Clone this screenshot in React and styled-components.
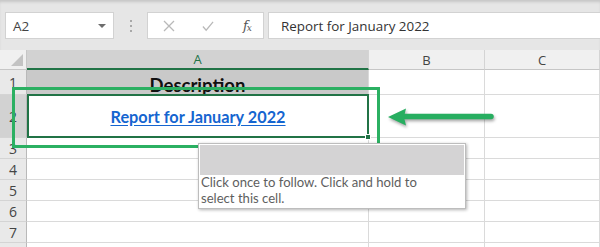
import React from 'react';
import styled, { createGlobalStyle } from 'styled-components';

const Global = createGlobalStyle`
  html, body { margin: 0; padding: 0; background: #fff; }
  body { font-family: Lato, "Open Sans", "Liberation Sans", sans-serif; overflow: hidden; }
  * { box-sizing: border-box; }
`;

const Page = styled.div`
  position: relative;
  width: 600px;
  height: 247px;
  overflow: hidden;
  background: #fff;
`;

const Toolbar = styled.div`
  height: 50px;
  background: #e6e6e6;
  display: flex;
  align-items: center;
  padding: 1px 0 0 5px;
  box-shadow: inset 0 3px 3px -1px rgba(0, 0, 0, 0.14);
`;

const Box = styled.div`
  height: 27px;
  background: #fff;
  border: 1px solid #d2d2d2;
  display: flex;
  align-items: center;
`;

const NameBox = styled(Box)`
  width: 109px;
  justify-content: space-between;
  padding: 0 7px 0 7px;
  font-family: "Open Sans", sans-serif;
  font-size: 13.5px;
  color: #444;
`;

const Caret = styled.span`
  width: 0;
  height: 0;
  border-left: 4px solid transparent;
  border-right: 4px solid transparent;
  border-top: 4px solid #6d6d6d;
`;

const Separator = styled.div`
  width: 33px;
  display: flex;
  flex-direction: column;
  align-items: center;
  gap: 3px;
`;

const Dot = styled.span`
  width: 2px;
  height: 2px;
  background: #a8a8a8;
`;

const ButtonBox = styled(Box)`
  width: 117px;
  padding-left: 15px;
  gap: 27px;
`;

const IconSlot = styled.span`
  width: 12px;
  display: flex;
  justify-content: center;
  color: #b4b4b4;
`;

const Fx = styled.span`
  font-family: "DejaVu Serif", "Liberation Serif", serif;
  font-style: italic;
  font-size: 13px;
  color: #555;
  letter-spacing: -1px;
  white-space: nowrap;
  sub {
    font-size: 9px;
    vertical-align: -1px;
  }
`;

const FormulaBar = styled(Box)`
  flex: 1;
  margin-left: 4px;
  border-right: none;
  padding-left: 12px;
  font-family: "Open Sans", sans-serif;
  font-size: 13.4px;
  color: #333;
`;

const Sheet = styled.div`
  display: grid;
  grid-template-columns: 27px 342px 116px 115px;
  grid-template-rows: 20px 25px 43px repeat(6, 21px);
`;

const ColHead = styled.div`
  background: ${p => (p.$active ? '#d2d2d2' : '#f0f0f0')};
  border-right: 1px solid #d4d4d4;
  border-bottom: ${p => (p.$active ? '2px solid #217346' : '1px solid #c6c6c6')};
  color: ${p => (p.$active ? '#217346' : '#444')};
  font-family: "Open Sans", sans-serif;
  font-size: 13px;
  display: flex;
  align-items: center;
  justify-content: center;
`;

const Corner = styled.div`
  background: #f0f0f0;
  border-right: 1px solid #c6c6c6;
  border-bottom: 1px solid #c6c6c6;
  display: flex;
  align-items: flex-end;
  justify-content: flex-end;
  padding: 0 3px 3px 0;
`;

const CornerTri = styled.span`
  width: 0;
  height: 0;
  border-left: 12px solid transparent;
  border-bottom: 12px solid #c3c3c3;
`;

const RowHead = styled.div`
  background: ${p => (p.$active ? '#d2d2d2' : '#e9e9e9')};
  border-right: 1px solid #b9b9b9;
  border-bottom: 1px solid #d4d4d4;
  color: #444;
  font-family: "Open Sans", sans-serif;
  font-size: 14px;
  display: flex;
  align-items: center;
  justify-content: center;
`;

const Cell = styled.div`
  position: relative;
  background: ${p => p.$bg || '#fff'};
  border-right: 1px solid #dadada;
  border-bottom: 1px solid #dadada;
  display: flex;
  align-items: center;
  justify-content: center;
`;

const SelectedCell = styled(Cell)`
  border: 2px solid #217346;
  margin: -1px 0 0 0;
  z-index: 1;
`;

const Handle = styled.span`
  position: absolute;
  right: -4px;
  bottom: -4px;
  width: 6px;
  height: 6px;
  background: #217346;
  border: 1px solid #fff;
`;

const Heading = styled.span`
  font-weight: 700;
  font-size: 18.5px;
  color: #111;
  padding-top: 6px;
`;

const Link = styled.a`
  font-weight: 700;
  font-size: 16.3px;
  color: #1565d0;
  text-decoration: underline;
  text-underline-offset: 2px;
`;

const Annotation = styled.div`
  position: absolute;
  left: 12px;
  top: 87px;
  width: 368px;
  height: 61px;
  border: 3px solid #2bb062;
  z-index: 2;
`;

const Arrow = styled.svg`
  position: absolute;
  left: 385px;
  top: 104px;
  z-index: 2;
  filter: drop-shadow(1px 2px 1.5px rgba(0, 0, 0, 0.35));
`;

const Tooltip = styled.div`
  position: absolute;
  left: 198px;
  top: 143px;
  width: 268px;
  height: 66px;
  background: #fff;
  border: 1px solid #bdbdbd;
  box-shadow: 1px 1px 3px rgba(0, 0, 0, 0.3);
  padding: 1px;
  z-index: 3;
  display: flex;
  flex-direction: column;
`;

const TipBand = styled.div`
  height: 30px;
  background: #d4d3d4;
`;

const TipText = styled.div`
  font-size: 13.1px;
  line-height: 15.5px;
  color: #5e5e5e;
  padding: 0 0 0 1px;
`;

const rows = [3, 4, 5, 6, 7];

export default function App() {
  return (
    <Page>
      <Global />
      <Toolbar>
        <NameBox>
          <span>A2</span>
          <Caret />
        </NameBox>
        <Separator>
          <Dot />
          <Dot />
          <Dot />
        </Separator>
        <ButtonBox>
          <IconSlot>
            <svg width="12" height="12" viewBox="0 0 12 12">
              <path d="M1 1 L11 11 M11 1 L1 11" stroke="#b9b9b9" strokeWidth="1.3" fill="none" />
            </svg>
          </IconSlot>
          <IconSlot>
            <svg width="13" height="12" viewBox="0 0 13 12">
              <path d="M1 6.5 L4.5 10.5 L12 1.5" stroke="#b9b9b9" strokeWidth="1.4" fill="none" />
            </svg>
          </IconSlot>
          <IconSlot>
            <Fx>f<sub>x</sub></Fx>
          </IconSlot>
        </ButtonBox>
        <FormulaBar>Report for January 2022</FormulaBar>
      </Toolbar>
      <Sheet>
        <Corner>
          <CornerTri />
        </Corner>
        <ColHead $active>A</ColHead>
        <ColHead>B</ColHead>
        <ColHead>C</ColHead>

        <RowHead>1</RowHead>
        <Cell $bg="#c9c9c9">
          <Heading>Description</Heading>
        </Cell>
        <Cell />
        <Cell />

        <RowHead $active>2</RowHead>
        <SelectedCell>
          <Link href="#">Report for January 2022</Link>
          <Handle />
        </SelectedCell>
        <Cell />
        <Cell />

        {rows.map(r => (
          <React.Fragment key={r}>
            <RowHead>{r}</RowHead>
            <Cell />
            <Cell />
            <Cell />
          </React.Fragment>
        ))}
        <RowHead />
        <Cell />
        <Cell />
        <Cell />
      </Sheet>

      <Annotation />
      <Arrow width="115" height="26" viewBox="0 0 115 26">
        <line x1="20" y1="12.5" x2="106" y2="12.5" stroke="#27ae60" strokeWidth="5.5" strokeLinecap="round" />
        <polygon points="3,13 21,4.5 19,13 21,21.5" fill="#27ae60" />
      </Arrow>
      <Tooltip>
        <TipBand />
        <TipText>
          Click once to follow. Click and hold to
          <br />
          select this cell.
        </TipText>
      </Tooltip>
    </Page>
  );
}
